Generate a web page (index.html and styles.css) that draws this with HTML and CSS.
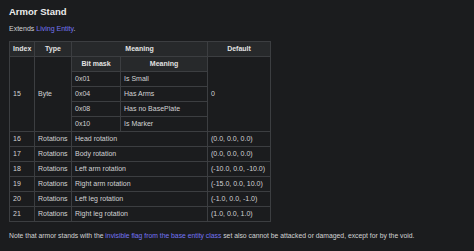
FILE: index.html
```html
<!DOCTYPE html>
<html lang="en">
<head>
    <meta charset="UTF-8">
    <meta name="viewport" content="width=device-width, initial-scale=1.0">
    <title>Armor Stand</title>
    <link rel="stylesheet" href="styles.css">
</head>
<body>
    <main class="entity">
        <h4 class="entity-title">Armor Stand</h4>
        <p class="entity-text">Extends <a href="#living-entity">Living Entity</a>.</p>

        <table class="meta">
            <colgroup>
                <col class="col-index">
                <col class="col-type">
                <col class="col-mask">
                <col class="col-meaning">
                <col class="col-default">
            </colgroup>
            <tr>
                <th>Index</th>
                <th>Type</th>
                <th colspan="2">Meaning</th>
                <th>Default</th>
            </tr>
            <tr>
                <td rowspan="5">15</td>
                <td rowspan="5">Byte</td>
                <th>Bit mask</th>
                <th>Meaning</th>
                <td rowspan="5">0</td>
            </tr>
            <tr><td>0x01</td><td>Is Small</td></tr>
            <tr><td>0x04</td><td>Has Arms</td></tr>
            <tr><td>0x08</td><td>Has no BasePlate</td></tr>
            <tr><td>0x10</td><td>Is Marker</td></tr>
            <tr><td>16</td><td>Rotations</td><td colspan="2">Head rotation</td><td>(0.0, 0.0, 0.0)</td></tr>
            <tr><td>17</td><td>Rotations</td><td colspan="2">Body rotation</td><td>(0.0, 0.0, 0.0)</td></tr>
            <tr><td>18</td><td>Rotations</td><td colspan="2">Left arm rotation</td><td>(-10.0, 0.0, -10.0)</td></tr>
            <tr><td>19</td><td>Rotations</td><td colspan="2">Right arm rotation</td><td>(-15.0, 0.0, 10.0)</td></tr>
            <tr><td>20</td><td>Rotations</td><td colspan="2">Left leg rotation</td><td>(-1.0, 0.0, -1.0)</td></tr>
            <tr><td>21</td><td>Rotations</td><td colspan="2">Right leg rotation</td><td>(1.0, 0.0, 1.0)</td></tr>
        </table>

        <p class="entity-text note">Note that armor stands with the <a href="#entity">invisible flag from the base entity class</a> set also cannot be attacked or damaged, except for by the void.</p>
    </main>
</body>
</html>
```

FILE: styles.css
```css
:root {
    --page-bg: #1b1c1e;
    --head-bg: #27292b;
    --border: #3c3e41;
    --text: #d2d3d4;
    --link: #7474f2;
}
* {
    box-sizing: border-box;
}
html, body {
    margin: 0;
    padding: 0;
    background: var(--page-bg);
    color: var(--text);
    font-family: "Liberation Sans", Arial, sans-serif;
}
.entity {
    padding: 6px 9px 0;
}

.entity-title {
    margin: 0;
    font-size: 9.5px;
    line-height: 12px;
    font-weight: bold;
    color: #ececec;
}
.entity-text {
    margin: 6px 0 0;
    font-size: 7px;
    line-height: 9px;
}
.entity-text a {
    color: var(--link);
    text-decoration: none;
}
.entity-text.note {
    margin-top: 9px;
    font-size: 6.8px;
}

.meta {
    margin-top: 8px;
    width: 261px;
    table-layout: fixed;
    border-collapse: collapse;
    font-size: 7px;
    line-height: 8px;
}
.col-index { width: 25px; }
.col-type { width: 37px; }
.col-mask { width: 49px; }
.col-meaning { width: 87px; }
.col-default { width: 63px; }

.meta th, .meta td {
    padding: 3px 3px;
    border: 1px solid var(--border);
    white-space: nowrap;
    overflow: hidden;
}
.meta th {
    background: var(--head-bg);
    font-weight: bold;
    text-align: center;
    color: #e2e2e2;
}
.meta td {
    text-align: left;
}
```
